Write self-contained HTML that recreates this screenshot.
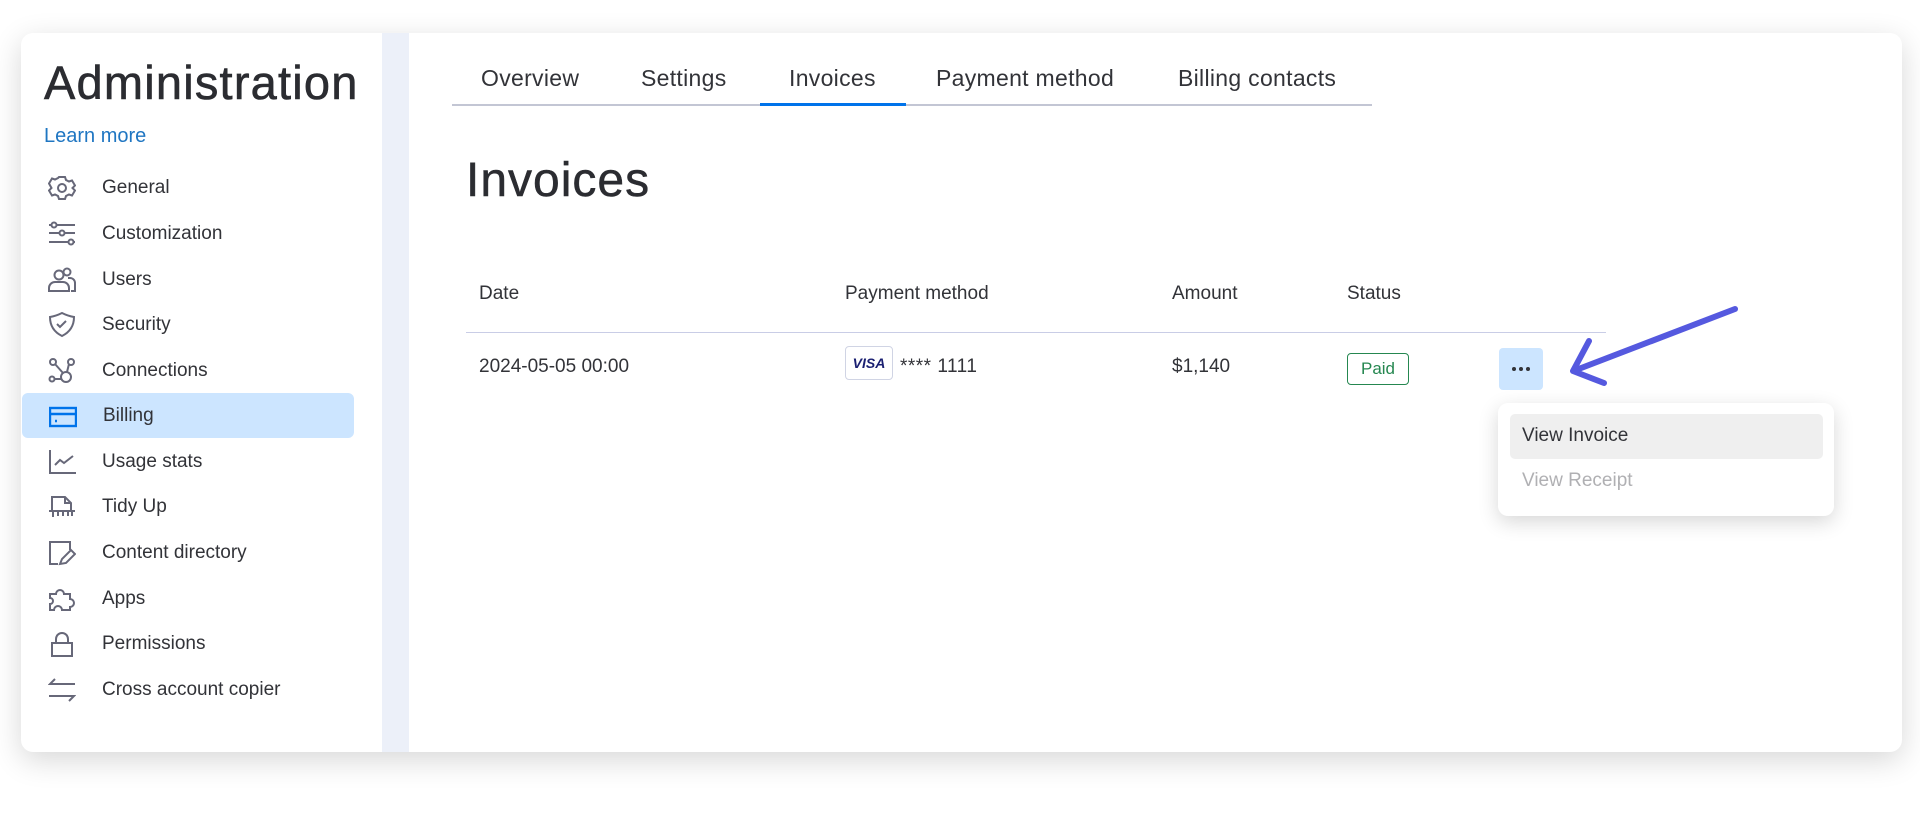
<!DOCTYPE html>
<html><head><meta charset="utf-8"><style>
*{box-sizing:border-box;margin:0;padding:0}
body{width:1920px;height:818px;background:#fff;font-family:"Liberation Sans",sans-serif;color:#323338;position:relative;overflow:hidden}
.card{position:absolute;left:21px;top:33px;width:1881px;height:719px;background:#fff;border-radius:12px;box-shadow:0 8px 30px rgba(0,0,0,.16);overflow:hidden}
.abs{position:absolute;white-space:nowrap}
.strip{position:absolute;left:361px;top:0;width:27px;height:719px;background:#ecf0f9}
.nav{position:absolute;left:0;width:332px;height:45px;font-size:19px;line-height:45px}
.nav .t{position:absolute;left:81px;top:0}
.nav svg{position:absolute;left:27px;top:10px}
.sel{background:#cce5ff;border-radius:6px;left:1px}
.tab{position:absolute;top:64px;font-size:23px}
</style></head><body>
<div class="card">
<div class="strip"></div>
<div class="abs" style="left:23px;top:22px;font-size:47px;letter-spacing:1.2px;color:#2b2c31;-webkit-text-stroke:0.6px #2b2c31">Administration</div>
<div class="abs" style="left:23px;top:92px;font-size:20px;color:#1f76c2">Learn more</div>

<div class="nav" style="top:132px"><svg width="28" height="26" viewBox="0 0 28 26" fill="none" stroke="#676879" stroke-width="2"><path d="M11 2h6l1 3 3 1.5 3-1 3 5-2.5 2.5 2.5 2.5-3 5-3-1-3 1.5-1 3h-6l-1-3-3-1.5-3 1-3-5 2.5-2.5L1 8.5l3-5 3 1 3-1.5z"/><circle cx="14" cy="13" r="4"/></svg><span class="t">General</span></div>
<div class="nav" style="top:178px"><svg width="28" height="26" viewBox="0 0 28 26" fill="none" stroke="#676879" stroke-width="2"><path d="M1 4h26M1 12h26M1 21h26"/><circle cx="6" cy="4" r="2.5" fill="#fff"/><circle cx="14" cy="12" r="2.5" fill="#fff"/><circle cx="23" cy="21" r="2.5" fill="#fff"/></svg><span class="t">Customization</span></div>
<div class="nav" style="top:224px"><svg width="28" height="26" viewBox="0 0 28 26" fill="none" stroke="#676879" stroke-width="2"><circle cx="11" cy="8" r="4.5"/><circle cx="19" cy="5" r="3.5"/><path d="M1 24v-3a6 6 0 0 1 6-6h8a6 6 0 0 1 6 6v3zM20 11h2a5 5 0 0 1 5 5v8h-4"/></svg><span class="t">Users</span></div>
<div class="nav" style="top:269px"><svg width="28" height="26" viewBox="0 0 28 26" fill="none" stroke="#676879" stroke-width="2"><path d="M2 5q6-1 12-4 6 3 12 4 0 13-12 19Q2 18 2 5z"/><path d="M9 12l3 3 6-6"/></svg><span class="t">Security</span></div>
<div class="nav" style="top:315px"><svg width="28" height="26" viewBox="0 0 28 26" fill="none" stroke="#676879" stroke-width="2"><circle cx="5" cy="4" r="3"/><circle cx="23" cy="4" r="3"/><circle cx="4" cy="21" r="2.5"/><circle cx="18" cy="19" r="5"/><path d="M7 6l8 9M21 6l-2 8M6.5 21h7"/></svg><span class="t">Connections</span></div>
<div class="nav sel" style="top:360px"><svg width="28" height="26" viewBox="0 0 28 26" fill="none" stroke="#0073ea" stroke-width="2.4"><rect x="1" y="5" width="26" height="18"/><path d="M1 11h26M6 18h2"/></svg><span class="t">Billing</span></div>
<div class="nav" style="top:406px"><svg width="28" height="26" viewBox="0 0 28 26" fill="none" stroke="#676879" stroke-width="2"><path d="M2 1v23h26M7 16l5-5 4 3 9-7"/></svg><span class="t">Usage stats</span></div>
<div class="nav" style="top:451px"><svg width="28" height="26" viewBox="0 0 28 26" fill="none" stroke="#676879" stroke-width="2"><path d="M4 17V3h13l6 6v8M1 17h26M17 3v6h6M5 17v6M10 17v5M15 17v5M20 17v5M24 17v5"/></svg><span class="t">Tidy Up</span></div>
<div class="nav" style="top:497px"><svg width="28" height="26" viewBox="0 0 28 26" fill="none" stroke="#676879" stroke-width="2"><path d="M10 24H2V2h20v8M12 24l2-5 9-9 4 4-9 9z"/></svg><span class="t">Content directory</span></div>
<div class="nav" style="top:543px"><svg width="28" height="26" viewBox="0 0 28 26" fill="none" stroke="#676879" stroke-width="2"><path d="M2 8h6a4 4 0 1 1 8 0h6v5a4 4 0 1 1 0 8v3H14a4 4 0 1 0-8 0H2v-6a3 3 0 1 0 0-6z"/></svg><span class="t">Apps</span></div>
<div class="nav" style="top:588px"><svg width="28" height="26" viewBox="0 0 28 26" fill="none" stroke="#676879" stroke-width="2"><rect x="4" y="12" width="20" height="13"/><path d="M8 12V8a6 6 0 0 1 12 0v4"/></svg><span class="t">Permissions</span></div>
<div class="nav" style="top:634px"><svg width="28" height="26" viewBox="0 0 28 26" fill="none" stroke="#676879" stroke-width="2"><path d="M27 7H2l5-5M1 19h25l-5 5"/></svg><span class="t">Cross account copier</span></div>

<div class="tab" style="left:460px;top:32px;letter-spacing:0.3px">Overview</div>
<div class="tab" style="left:620px;top:32px;letter-spacing:0.3px">Settings</div>
<div class="tab" style="left:768px;top:32px;letter-spacing:0.3px">Invoices</div>
<div class="tab" style="left:915px;top:32px;letter-spacing:0.3px">Payment method</div>
<div class="tab" style="left:1157px;top:32px;letter-spacing:0.3px">Billing contacts</div>
<div class="abs" style="left:431px;top:71px;width:920px;height:2px;background:#c3c6d4"></div>
<div class="abs" style="left:739px;top:70px;width:146px;height:3px;background:#0073ea"></div>

<div class="abs" style="left:445px;top:120px;font-size:48px;letter-spacing:1px;color:#2b2c31;-webkit-text-stroke:0.5px #2b2c31">Invoices</div>

<div class="abs" style="left:458px;top:250px;font-size:19px">Date</div>
<div class="abs" style="left:824px;top:250px;font-size:19px">Payment method</div>
<div class="abs" style="left:1151px;top:250px;font-size:19px">Amount</div>
<div class="abs" style="left:1326px;top:250px;font-size:19px">Status</div>
<div class="abs" style="left:445px;top:299px;width:1140px;height:1px;background:#c9cde6"></div>

<div class="abs" style="left:458px;top:323px;font-size:19px">2024-05-05 00:00</div>
<div class="abs" style="left:824px;top:313px;width:48px;height:34px;border:1px solid #d0d4e4;border-radius:4px;color:#1a1f71;font-weight:bold;font-style:italic;font-size:14px;text-align:center;line-height:32px">VISA</div>
<div class="abs" style="left:879px;top:323px;font-size:19px;letter-spacing:0.5px">**** 1111</div>
<div class="abs" style="left:1151px;top:323px;font-size:19px">$1,140</div>
<div class="abs" style="left:1326px;top:320px;width:62px;height:32px;border:1px solid #258750;border-radius:4px;color:#258750;font-size:17px;text-align:center;line-height:30px">Paid</div>
<div class="abs" style="left:1478px;top:315px;width:44px;height:42px;background:#cce5ff;border-radius:4px"><svg width="44" height="42"><g fill="#323338"><circle cx="15" cy="21" r="2"/><circle cx="22" cy="21" r="2"/><circle cx="29" cy="21" r="2"/></g></svg></div>

<div class="abs" style="left:1477px;top:370px;width:336px;height:113px;background:#fff;border-radius:10px;box-shadow:0 6px 20px rgba(0,0,0,.16)"></div>
<div class="abs" style="left:1489px;top:381px;width:313px;height:45px;background:#efefef;border-radius:5px"></div>
<div class="abs" style="left:1501px;top:392px;font-size:19px">View Invoice</div>
<div class="abs" style="left:1501px;top:437px;font-size:19px;color:#b0b0b3">View Receipt</div>
</div>
<svg class="abs" style="left:0;top:0" width="1920" height="818"><g fill="none" stroke="#5559df" stroke-width="6" stroke-linecap="round" stroke-linejoin="round"><path d="M1735 309L1576 370"/><path d="M1589 341L1573 371 1604 383"/></g></svg>
</body></html>
